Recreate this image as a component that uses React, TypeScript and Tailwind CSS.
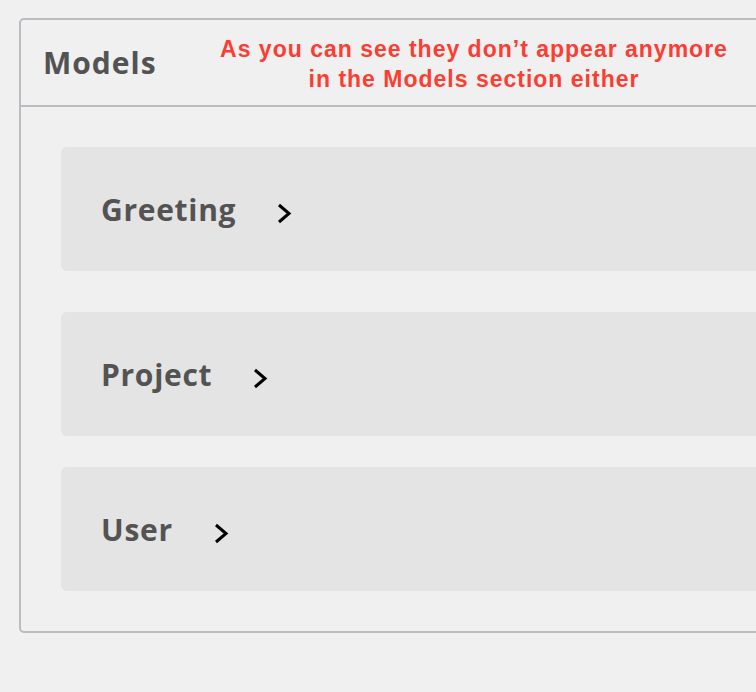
import React from 'react';

const models = [
  { name: 'Greeting', gap: 'mt-0' },
  { name: 'Project', gap: 'mt-[41px]' },
  { name: 'User', gap: 'mt-[31px]' },
];

function Chevron() {
  return (
    <svg width="15" height="21" viewBox="0 0 15 21" className="mt-[8px] shrink-0">
      <polyline points="2,2 12,10.5 2,19" fill="none" stroke="#000" strokeWidth="3" strokeLinejoin="miter" />
    </svg>
  );
}

export default function App() {
  return (
    <div className="w-[756px] h-[692px] overflow-hidden bg-[#f0f0f0] pt-[18px] pl-[19px]">
      <div className="relative w-[800px] border-2 border-[#bcbcc0] rounded-[5px]">
        {/* Header */}
        <div className="h-[87px] flex items-center pl-[22px] border-b-2 border-[#bcbcc0]">
          <h4 className="font-['Open_Sans',sans-serif] font-bold text-[30px] tracking-[1px] text-[#535353]">Models</h4>
        </div>

        {/* Annotation */}
        <div className="absolute left-[193px] top-[14px] w-[520px] text-center font-['Liberation_Sans',Arial,sans-serif] font-bold text-[23px] tracking-[1px] leading-[30px] text-[#fc3d32]">
          As you can see they don’t appear anymore
          <br />
          in the Models section either
        </div>

        {/* Model list */}
        <div className="px-[40px] pt-[40px] pb-[40px]">
          {models.map((m) => (
            <div
              key={m.name}
              className={`${m.gap} h-[124px] bg-[#e4e4e4] rounded-[6px] flex items-start pt-[48px] pl-[40px] gap-[41px]`}
            >
              <span className="font-['Open_Sans',sans-serif] font-bold text-[30px] tracking-[0.7px] leading-[30px] text-[#535353]">
                {m.name}
              </span>
              <Chevron />
            </div>
          ))}
        </div>
      </div>
    </div>
  );
}
